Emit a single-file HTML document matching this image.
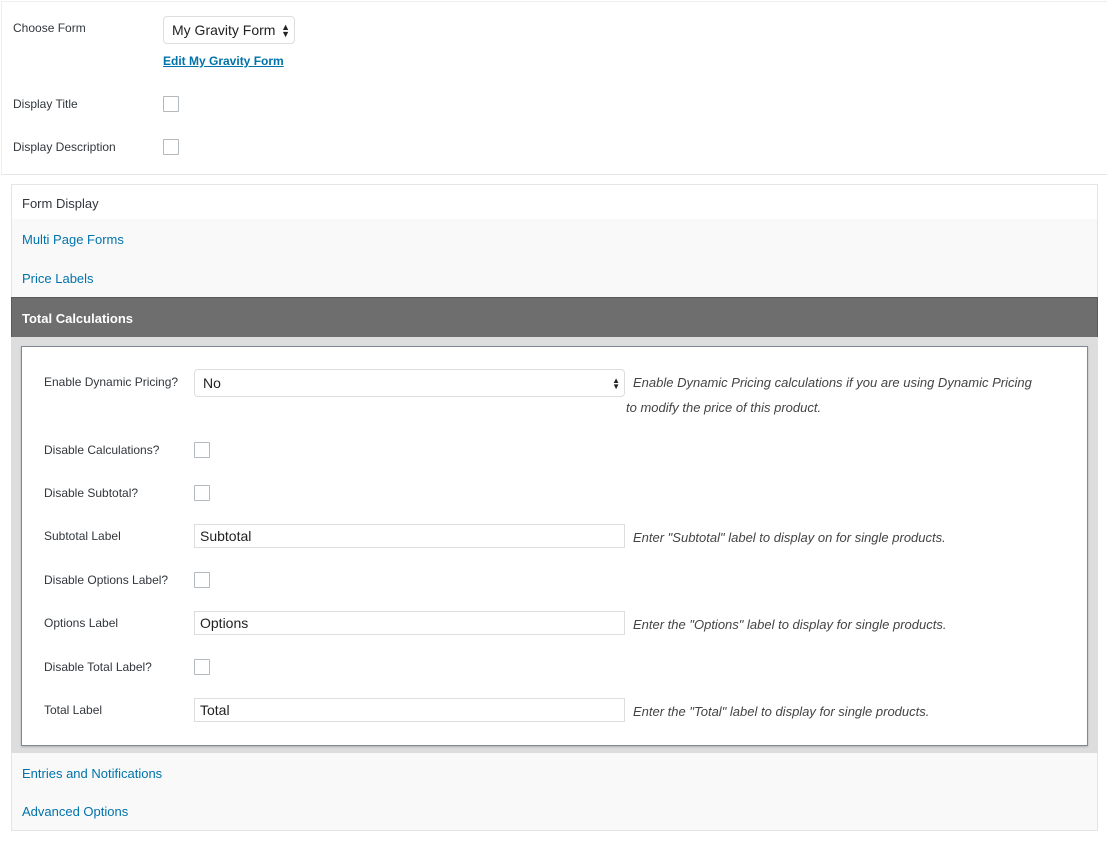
<!DOCTYPE html>
<html><head><style>
body{margin:0;background:#fff;font-family:"Liberation Sans",sans-serif;font-size:12px;color:#32373c;width:1107px;height:861px;position:relative;overflow:hidden}
.abs{position:absolute}
.cb{position:absolute;width:14px;height:14px;border:1px solid #b4b9be;background:#fff;border-radius:1px}
.lbl{position:absolute;font-size:12px;color:#32373c}
.sel{position:absolute;border:1px solid #ddd;border-radius:4px;background:#fff;font-size:14px;color:#222}
.inp{position:absolute;border:1px solid #ddd;background:#fff;font-size:14px;color:#222;height:22px;line-height:22px;padding-left:5px;box-sizing:border-box;height:24px}
.hint{position:absolute;font-style:italic;font-size:13px;color:#444}
.row{position:absolute;left:11px;width:1085px;border:1px solid #e5e5e5;background:#f9f9f9;font-size:13px;color:#0073aa}
.row span{position:absolute;left:10px}
</style></head><body>
<div class="abs" style="left:1px;top:1px;width:1106px;height:172px;border-top:1px solid #eee;border-left:1px solid #eee;border-bottom:1px solid #e5e5e5"></div>
<div class="lbl" style="left:13px;top:21px">Choose Form</div>
<div class="sel" style="left:163px;top:16px;width:130px;height:26px;line-height:26px"><span style="margin-left:8px">My Gravity Form</span><span style="position:absolute;right:4px;top:0;font-size:9px;line-height:7px;top:7px">▲<br>▼</span></div>
<div class="abs" style="left:163px;top:54px;font-weight:bold;color:#0073aa;text-decoration:underline;font-size:12px">Edit My Gravity Form</div>
<div class="lbl" style="left:13px;top:97px">Display Title</div>
<div class="cb" style="left:163px;top:96px"></div>
<div class="lbl" style="left:13px;top:140px">Display Description</div>
<div class="cb" style="left:163px;top:139px"></div>

<div class="row" style="top:184px;height:35px;background:#fff;color:#32373c"><span style="top:11px">Form Display</span></div>
<div class="row" style="top:219px;height:39px;border-top:none"><span style="top:13px">Multi Page Forms</span></div>
<div class="row" style="top:258px;height:39px;border-top:none"><span style="top:13px">Price Labels</span></div>
<div class="row" style="top:297px;height:39px;background:#6e6e6e;border-color:#5a5a5a;color:#fff;font-weight:bold"><span style="top:13px">Total Calculations</span></div>
<div class="abs" style="left:11px;top:337px;width:1087px;height:416px;background:#ddd"></div>
<div class="abs" style="left:21px;top:346px;width:1065px;height:398px;background:#fff;border:1px solid #7e8993;box-shadow:0 1px 2px rgba(0,0,0,.2)"></div>

<div class="lbl" style="left:44px;top:375px">Enable Dynamic Pricing?</div>
<div class="sel" style="left:194px;top:369px;width:429px;height:26px;line-height:26px;border-radius:4px"><span style="margin-left:8px">No</span><span style="position:absolute;right:4px;font-size:8px;line-height:6px;top:8px">▲<br>▼</span></div>
<div class="hint" style="left:633px;top:375px">Enable Dynamic Pricing calculations if you are using Dynamic Pricing</div>
<div class="hint" style="left:626px;top:400px">to modify the price of this product.</div>

<div class="lbl" style="left:44px;top:443px">Disable Calculations?</div>
<div class="cb" style="left:194px;top:442px"></div>
<div class="lbl" style="left:44px;top:486px">Disable Subtotal?</div>
<div class="cb" style="left:194px;top:485px"></div>
<div class="lbl" style="left:44px;top:529px">Subtotal Label</div>
<div class="inp" style="left:194px;top:524px;width:431px">Subtotal</div>
<div class="hint" style="left:633px;top:530px">Enter "Subtotal" label to display on for single products.</div>
<div class="lbl" style="left:44px;top:573px">Disable Options Label?</div>
<div class="cb" style="left:194px;top:572px"></div>
<div class="lbl" style="left:44px;top:616px">Options Label</div>
<div class="inp" style="left:194px;top:611px;width:431px">Options</div>
<div class="hint" style="left:633px;top:617px">Enter the "Options" label to display for single products.</div>
<div class="lbl" style="left:44px;top:660px">Disable Total Label?</div>
<div class="cb" style="left:194px;top:659px"></div>
<div class="lbl" style="left:44px;top:703px">Total Label</div>
<div class="inp" style="left:194px;top:698px;width:431px">Total</div>
<div class="hint" style="left:633px;top:704px">Enter the "Total" label to display for single products.</div>

<div class="row" style="top:753px;height:39px;border-top:none"><span style="top:13px">Entries and Notifications</span></div>
<div class="row" style="top:792px;height:38px;border-top:none"><span style="top:12px">Advanced Options</span></div>
</body></html>
